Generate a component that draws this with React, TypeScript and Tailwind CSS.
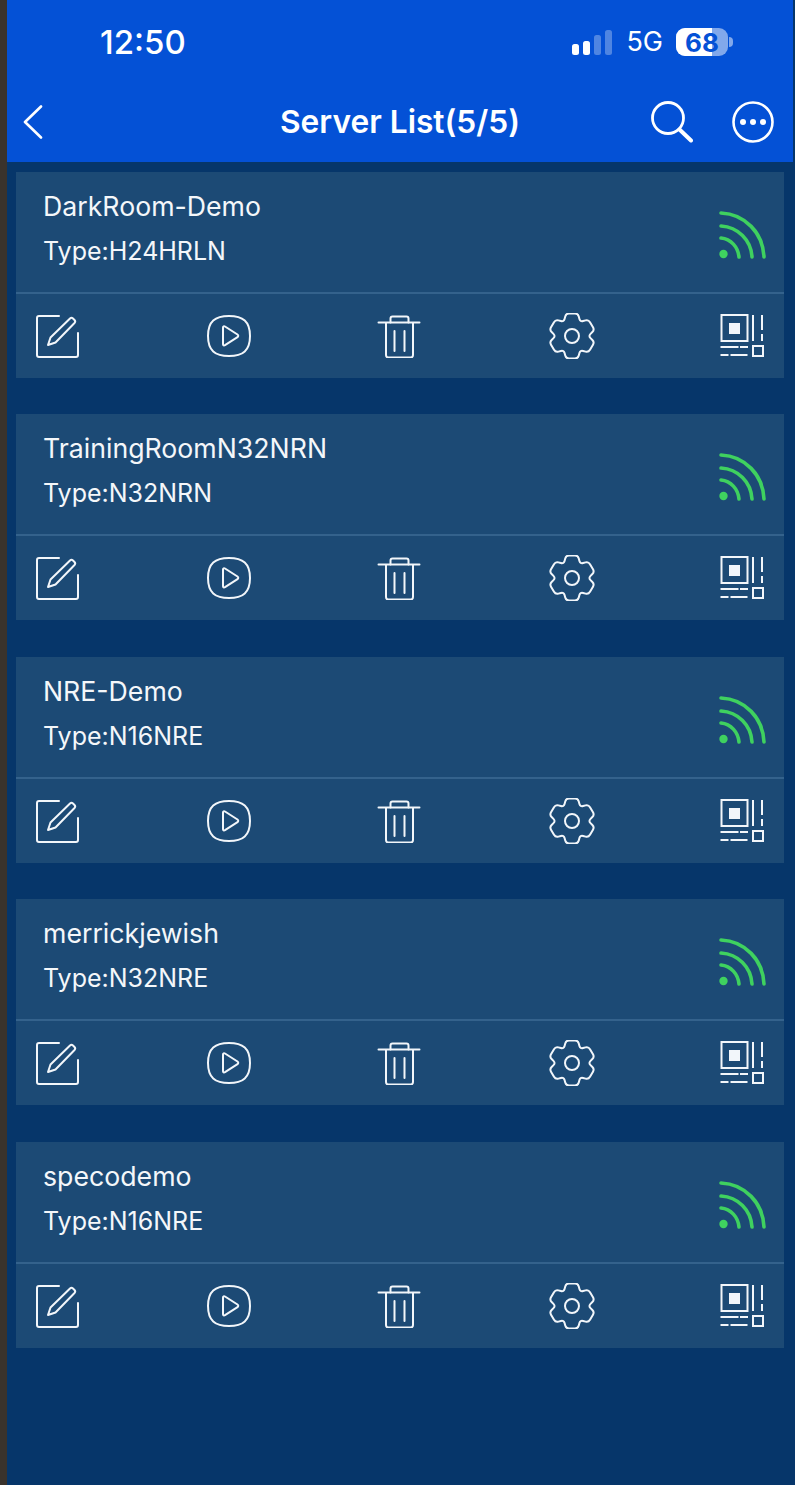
const servers = [
  { name: 'DarkRoom-Demo', type: 'Type:H24HRLN' },
  { name: 'TrainingRoomN32NRN', type: 'Type:N32NRN' },
  { name: 'NRE-Demo', type: 'Type:N16NRE' },
  { name: 'merrickjewish', type: 'Type:N32NRE' },
  { name: 'specodemo', type: 'Type:N16NRE' },
]

// six teeth, one pointing straight up, with small rounded corners
function gearPath() {
  const pts: [number, number][] = []
  for (let i = 0; i < 6; i++) {
    const a = (i * Math.PI) / 3
    const rot = (x: number, y: number): [number, number] => [
      23 + x * Math.cos(a) - y * Math.sin(a),
      23 + x * Math.sin(a) + y * Math.cos(a),
    ]
    pts.push(rot(-6, -22.5), rot(6, -22.5), rot(8.2, -14.2))
  }
  const toward = (p: [number, number], q: [number, number], r: number) => {
    const len = Math.hypot(q[0] - p[0], q[1] - p[1])
    const t = Math.min(r / len, 0.5)
    return `${(p[0] + (q[0] - p[0]) * t).toFixed(2)} ${(p[1] + (q[1] - p[1]) * t).toFixed(2)}`
  }
  let d = ''
  pts.forEach((p, i) => {
    const prev = pts[(i + pts.length - 1) % pts.length]
    const next = pts[(i + 1) % pts.length]
    d += `${i === 0 ? 'M' : 'L'}${toward(p, prev, 3)}Q${p[0].toFixed(2)} ${p[1].toFixed(2)} ${toward(p, next, 3)}`
  })
  return d + 'Z'
}

function EditIcon() {
  return (
    <svg width="44" height="44" viewBox="0 0 44 44" fill="none" stroke="#f2f6fa" strokeWidth="2" strokeLinecap="round" strokeLinejoin="round">
      <path d="M23 2H3A2 2 0 0 0 1 4v37a2 2 0 0 0 2 2h37a2 2 0 0 0 2-2V19" />
      <path d="M12 31l2.500-7.500L34 4.500a2.200 2.200 0 0 1 3 0l1.500 1.500a2.200 2.200 0 0 1 0 3L19.500 28.500z" />
    </svg>
  )
}

function PlayIcon() {
  return (
    <svg width="44" height="44" viewBox="0 0 44 44" fill="none" stroke="#f2f6fa" strokeWidth="2" strokeLinejoin="round">
      <path d="M22 2c14 0 21 5.500 21 20s-7 20-21 20S1 36.500 1 22 8 2 22 2z" />
      <path d="M16 13.500c0-1.200 1-1.600 2-1l12.500 8c1 .7 1 2 0 2.700l-12.500 8c-1 .6-2 .2-2-1z" />
    </svg>
  )
}

function TrashIcon() {
  return (
    <svg width="44" height="44" viewBox="0 0 44 44" fill="none" stroke="#f2f6fa" strokeWidth="2" strokeLinecap="round" strokeLinejoin="round">
      <path d="M1.500 8.500h41" />
      <path d="M13.500 8.500V4.500a2 2 0 0 1 2-2h14a2 2 0 0 1 2 2v4" />
      <path d="M9 9v32a2.500 2.500 0 0 0 2.500 2.500h22a2.500 2.500 0 0 0 2.500-2.500V9" />
      <path d="M17.500 17v20M27.500 17v20" />
    </svg>
  )
}

function GearIcon() {
  return (
    <svg className="translate-x-[1px]" width="46" height="46" viewBox="0 0 46 46" fill="none" stroke="#f2f6fa" strokeWidth="2">
      <path strokeLinejoin="round" d={gearPath()} />
      <circle cx="23" cy="23" r="7" />
    </svg>
  )
}

function QrIcon() {
  return (
    <svg width="44" height="44" viewBox="0 0 44 44" fill="none" stroke="#f2f6fa" strokeWidth="2">
      <rect x="1.500" y="1" width="26" height="26" />
      <rect x="9" y="9" width="11" height="11" fill="#f2f6fa" stroke="none" />
      <path d="M33 1v26M42 1v15M42 20v7" />
      <path d="M0.500 33h18M20 33h8M0.500 41h8M10.500 41h17" />
      <rect x="33" y="32" width="10" height="10" />
    </svg>
  )
}

function SignalIcon() {
  return (
    <svg className="mt-[6px]" width="48" height="48" viewBox="0 0 48 48" fill="none" stroke="#3fd15f" strokeWidth="3.600" strokeLinecap="round">
      <path d="M3 2c24 1 42 20 43 44" />
      <path d="M3 15c17 1 30 14 31 31" />
      <path d="M3 27c10 1 17 9 18 19" />
      <circle cx="5.500" cy="43" r="4.200" fill="#3fd15f" stroke="none" />
    </svg>
  )
}

function ServerCard({ name, type }: { name: string; type: string }) {
  return (
    <div className="h-[206px] bg-[#1c4a75]">
      <div className="flex h-[122px] items-center justify-between border-b-2 border-[#34628c] pl-[27px] pr-[18px]">
        <div className="pb-[7px] text-[#f4f7fa]">
          <p className="text-[26.700px] leading-[36px]">{name}</p>
          <p className="mt-[9px] text-[25px] leading-[36px]">{type}</p>
        </div>
        <SignalIcon />
      </div>
      <div className="flex h-[84px] items-center justify-between px-5">
        <EditIcon />
        <PlayIcon />
        <TrashIcon />
        <GearIcon />
        <QrIcon />
      </div>
    </div>
  )
}

export default function App() {
  return (
    <div className="flex h-[1485px] w-[795px] overflow-hidden bg-[#3a332c] font-['Inter',sans-serif]">
      <div className="ml-[7px] flex-1 bg-[#06366a]">
        <header className="mr-[2px] h-[162px] bg-[#0451d6] text-white">
          <div className="flex h-[84px] items-center justify-between pl-[93px] pr-[60px]">
            <span className="translate-y-[1px] text-[33px] font-medium">12:50</span>
            <div className="flex items-center">
              <svg width="40" height="25" viewBox="0 0 40 25" fill="white">
                <rect x="0" y="14" width="7" height="11" rx="2.500" />
                <rect x="11" y="11" width="7" height="14" rx="2.500" />
                <rect x="22" y="5" width="7" height="20" rx="2.500" fillOpacity="0.3" />
                <rect x="33" y="0" width="7" height="25" rx="2.500" fillOpacity="0.3" />
              </svg>
              <span className="ml-[14px] text-[27px]">5G</span>
              <div className="relative ml-[13px] flex h-[28px] w-[52px] items-center justify-center overflow-hidden rounded-[9px] bg-white/50">
                <div className="absolute inset-y-0 left-0 w-[36px] bg-white" />
                <span className="relative text-[26px] font-bold text-[#0451d6]">68</span>
              </div>
              <div className="ml-[1px] h-[10px] w-[4px] rounded-r-full bg-white/50" />
            </div>
          </div>
          <div className="flex h-[78px] items-center pb-[2px] pl-[16px] pr-[19px]">
            <svg width="20" height="34" viewBox="0 0 20 34" fill="none" stroke="white" strokeWidth="2.600" strokeLinecap="round" strokeLinejoin="round">
              <path d="M18 1.500 2 17l16 15.500" />
            </svg>
            <h1 className="ml-[237px] text-[31.700px] font-semibold">Server List(5/5)</h1>
            <svg className="ml-auto mr-[39px]" width="42" height="42" viewBox="0 0 42 42" fill="none" stroke="white" strokeWidth="2.800" strokeLinecap="round">
              <circle cx="17" cy="17" r="15.500" />
              <path d="M28.500 28.500 40 39.500" strokeWidth="4" />
            </svg>
            <svg width="42" height="42" viewBox="0 0 42 42" fill="none" stroke="white" strokeWidth="2.600">
              <circle cx="21" cy="21" r="19.500" />
              <circle cx="11" cy="21" r="3" fill="white" stroke="none" />
              <circle cx="21" cy="21" r="3" fill="white" stroke="none" />
              <circle cx="31" cy="21" r="3" fill="white" stroke="none" />
            </svg>
          </div>
        </header>
        <main className="ml-[9px] mr-[11px] mt-[10px] flex flex-col gap-[36.4px]">
          {servers.map((s) => (
            <ServerCard key={s.name} name={s.name} type={s.type} />
          ))}
        </main>
      </div>
    </div>
  )
}
